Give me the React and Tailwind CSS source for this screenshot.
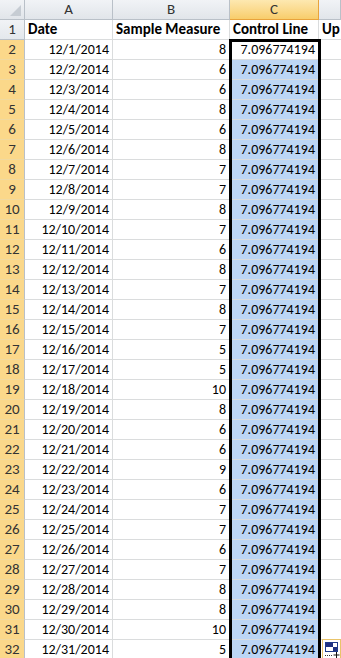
import React from "react";

const measures = [8, 6, 6, 8, 6, 8, 7, 7, 8, 7, 6, 8, 7, 8, 7, 5, 5, 10, 8, 6, 6, 9, 6, 7, 7, 6, 7, 8, 8, 10, 5];

const rows = measures.map((m, i) => ({
  n: i + 2,
  date: `12/${i + 1}/2014`,
  measure: m,
  control: "7.096774194",
}));

const FillIcon = () => (
  <div className="w-[19px] h-[20px] bg-white border border-[#e9c46a] flex items-start justify-start pt-[1px] pl-[1px]">
    <svg width="16" height="17" viewBox="0 0 16 17">
      <rect x="1.5" y="1.5" width="12" height="9" fill="#ffffff" stroke="#1f3a8a" />
      <rect x="2" y="2" width="7" height="4" fill="#1e2f80" />
      <rect x="9" y="2" width="4" height="4" fill="#ffffff" />
      <rect x="2" y="6" width="7" height="4" fill="#ffffff" />
      <rect x="9" y="6" width="4" height="4" fill="#1e2f80" />
      <line x1="1" y1="14.5" x2="9" y2="14.5" stroke="#333" strokeDasharray="1 1" />
      <line x1="12.5" y1="11" x2="12.5" y2="17" stroke="#111" />
      <line x1="9.5" y1="14" x2="15.5" y2="14" stroke="#111" />
    </svg>
  </div>
);

const ColHeader = ({ label, className }) => (
  <div
    className={`h-full flex items-center justify-center border-r border-b border-[#b9c0c8] text-[#333] bg-gradient-to-b from-[#f1f3f6] to-[#e1e5ea] ${className}`}
  >
    {label}
  </div>
);

export default function App() {
  return (
    <div
      className="relative w-[341px] h-[658px] overflow-hidden bg-white text-[14px] leading-none text-black"
      style={{ fontFamily: "Calibri, Carlito, Lato, 'Liberation Sans', sans-serif" }}
    >
      {/* column headers */}
      <div className="flex h-[20px] text-[15px]">
        <div className="w-[25px] shrink-0 h-full border-r border-b border-[#b9c0c8] bg-gradient-to-b from-[#f1f3f6] to-[#e1e5ea] flex items-end justify-end p-[3px]">
          <div className="w-0 h-0 border-l-[11px] border-l-transparent border-b-[11px] border-b-[#c6ccd3]" />
        </div>
        <ColHeader label="A" className="w-[88px] shrink-0" />
        <ColHeader label="B" className="w-[117px] shrink-0" />
        <div className="w-[89px] shrink-0 h-full flex items-center justify-center border-r border-b border-[#e8a33c] text-[#333] bg-gradient-to-b from-[#fde8b0] to-[#f8cd6a]">
          C
        </div>
        <ColHeader label="" className="flex-1" />
      </div>

      {/* row 1 */}
      <div className="flex h-[20px] text-[15px]">
        <div className="w-[25px] shrink-0 h-full flex items-center justify-center border-r border-b border-[#b9c0c8] text-[#333] bg-gradient-to-b from-[#f1f3f6] to-[#e4e8ec]">
          1
        </div>
        <div className="w-[88px] shrink-0 h-full flex items-center px-[3px] font-bold border-r border-b border-[#dadcdd]">
          Date
        </div>
        <div className="w-[117px] shrink-0 h-full flex items-center px-[3px] font-bold border-r border-b border-[#dadcdd]">
          Sample Measure
        </div>
        <div className="w-[89px] shrink-0 h-full flex items-center px-[3px] font-bold border-r border-b border-[#dadcdd] whitespace-nowrap">
          Control Line
        </div>
        <div className="flex-1 h-full flex items-center px-[3px] font-bold border-b border-[#dadcdd] whitespace-nowrap">
          Up
        </div>
      </div>

      {rows.map((r) => (
        <div key={r.n} className="flex h-[20px]">
          <div className="w-[25px] shrink-0 h-full flex items-center justify-center border-r border-b border-r-[#b9c0c8] border-b-[#f0d9a0] text-[15px] text-[#333] bg-[#fbd88a]">
            {r.n}
          </div>
          <div className="w-[88px] shrink-0 h-full flex items-center justify-end px-[3px] border-r border-b border-[#dadcdd]">
            {r.date}
          </div>
          <div className="w-[117px] shrink-0 h-full flex items-center justify-end px-[3px] border-r border-b border-[#dadcdd]">
            {r.measure}
          </div>
          <div
            className={`w-[89px] shrink-0 h-full flex items-center justify-end px-[3px] border-r border-b border-[#dadcdd] ${
              r.n === 2 ? "bg-white" : "bg-[#bcd6f5]"
            }`}
          >
            {r.control}
          </div>
          <div className="flex-1 h-full border-b border-[#dadcdd]" />
        </div>
      ))}

      {/* selection border C2:C32 */}
      <div className="absolute left-[229px] top-[39px] w-[92px] h-[630px] border-[3px] border-black pointer-events-none" />

      {/* auto fill options */}
      <div className="absolute left-[322px] top-[639px]">
        <FillIcon />
      </div>
    </div>
  );
}
